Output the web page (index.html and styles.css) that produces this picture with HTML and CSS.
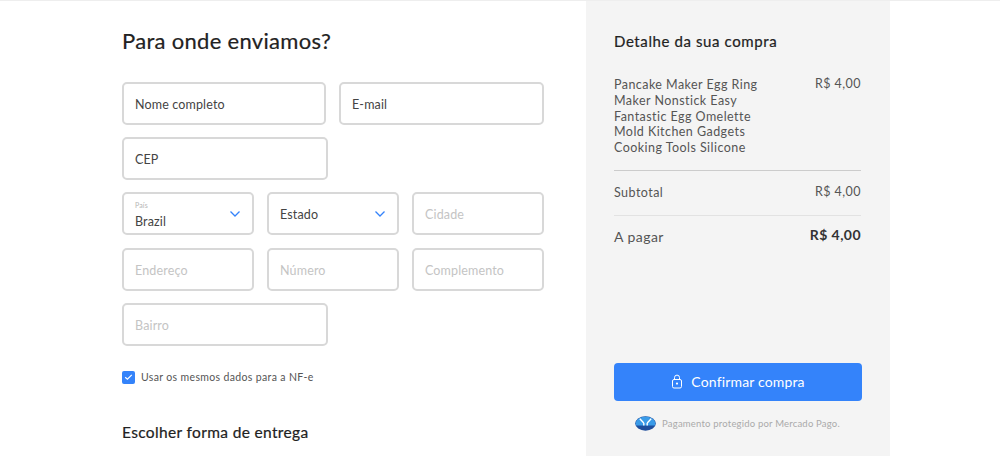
FILE: index.html
```html
<!DOCTYPE html>
<html lang="pt-BR">
<head>
    <meta charset="UTF-8">
    <meta name="viewport" content="width=device-width, initial-scale=1.0">
    <title>Para onde enviamos?</title>
    <link rel="stylesheet" href="styles.css">
</head>
<body>
    <div class="page">
        <main class="shipping">
            <h1>Para onde enviamos?</h1>

            <form class="address-form">
                <div class="form-row">
                    <div class="field name"><span class="value">Nome completo</span></div>
                    <div class="field grow"><span class="value">E-mail</span></div>
                </div>
                <div class="form-row">
                    <div class="field half"><span class="value">CEP</span></div>
                </div>
                <div class="form-row">
                    <div class="field third select">
                        <div class="stacked">
                            <span class="mini-label">País</span>
                            <span class="value">Brazil</span>
                        </div>
                        <svg class="chevron" width="12" height="8" viewBox="0 0 12 8"><path d="M1.5 1.5 6 6l4.500-4.500" fill="none" stroke="#3483fa" stroke-width="1.300"/></svg>
                    </div>
                    <div class="field third select">
                        <span class="value">Estado</span>
                        <svg class="chevron" width="12" height="8" viewBox="0 0 12 8"><path d="M1.5 1.5 6 6l4.500-4.500" fill="none" stroke="#3483fa" stroke-width="1.300"/></svg>
                    </div>
                    <div class="field third"><span class="placeholder">Cidade</span></div>
                </div>
                <div class="form-row">
                    <div class="field third"><span class="placeholder">Endereço</span></div>
                    <div class="field third"><span class="placeholder">Número</span></div>
                    <div class="field third"><span class="placeholder">Complemento</span></div>
                </div>
                <div class="form-row">
                    <div class="field half"><span class="placeholder">Bairro</span></div>
                </div>
            </form>

            <label class="check-row">
                <span class="checkbox">
                    <svg width="9" height="8" viewBox="0 0 9 8"><path d="M1.2 4.200 3.400 6.200 7.800 1.800" fill="none" stroke="#fff" stroke-width="1.200"/></svg>
                </span>
                Usar os mesmos dados para a NF-e
            </label>

            <h2>Escolher forma de entrega</h2>
        </main>

        <aside class="summary">
            <h3>Detalhe da sua compra</h3>

            <div class="line product">
                <span class="product-name">Pancake Maker Egg Ring Maker Nonstick Easy Fantastic Egg Omelette Mold Kitchen Gadgets Cooking Tools Silicone</span>
                <span class="price">R$ 4,00</span>
            </div>
            <div class="line subtotal">
                <span>Subtotal</span>
                <span class="price">R$ 4,00</span>
            </div>
            <div class="line total">
                <span>A pagar</span>
                <span class="price">R$ 4,00</span>
            </div>

            <div class="summary-bottom">
                <button type="button" class="confirm">
                    <svg width="12" height="15" viewBox="0 0 12 15"><rect x="1.500" y="5.500" width="9" height="8.500" rx="1.500" fill="none" stroke="#fff" stroke-width="1"/><path d="M3.500 5.500V3.600a2.500 2.500 0 0 1 5 0v1.900" fill="none" stroke="#fff" stroke-width="1"/><circle cx="6" cy="9.600" r="1.100" fill="#fff"/></svg>
                    Confirmar compra
                </button>
                <div class="protected">
                    <svg width="21" height="15" viewBox="0 0 21 15">
                        <ellipse cx="10.500" cy="7.500" rx="10.300" ry="7.200" fill="#1f4e9c"/>
                        <path d="M.8 6.500C2 2.500 6.500.8 10.500.8s8.500 1.700 9.700 5.700c.2 1.100.1 2-.3 3H1.100c-.4-1-.5-1.900-.3-3z" fill="#3a9be8"/>
                        <path d="M4.800 2.800 8.800 7M16.200 2.800 12.200 7M8.800 7v2.500M12.200 7v2.500" fill="none" stroke="#fff" stroke-width="1.400"/>
                    </svg>
                    <span>Pagamento protegido por Mercado Pago.</span>
                </div>
            </div>
        </aside>
    </div>
</body>
</html>
```

FILE: styles.css
```css
html, body {
    margin: 0;
    padding: 0;
    height: 456px;
    overflow: hidden;
    background-color: #ffffff;
    font-family: Lato, "Open Sans", sans-serif;
    color: #333;
}

.page {
    display: flex;
    height: 456px;
    box-sizing: border-box;
    border-top: 1px solid #eeeeee;
    padding-left: 122px;
}

.shipping {
    width: 422px;
    margin-right: 42px;
}

h1 {
    margin: 26px 0 0;
    font-size: 22px;
    line-height: 28px;
    font-weight: 400;
    letter-spacing: 0.3px;
    color: #222;
    -webkit-text-stroke: 0.2px #222;
}

.address-form {
    display: flex;
    flex-direction: column;
    gap: 12.2px;
    margin-top: 27px;
}

.form-row {
    display: flex;
    gap: 13px;
}

.field {
    display: flex;
    align-items: center;
    justify-content: space-between;
    box-sizing: border-box;
    height: 43px;
    padding: 2px 11.5px 0 11px;
    border: 2px solid #d8d8d8;
    border-radius: 5px;
    background-color: #fff;
    font-size: 12.5px;
    letter-spacing: 0.15px;
}

.name { width: 204px; }
.grow { flex: 1; }
.half { width: 206px; }
.third { width: 132px; }

.value { color: #444; }
.placeholder { color: #c4c4c4; }

.stacked {
    display: flex;
    flex-direction: column;
    margin-top: 1px;
}

.mini-label {
    font-size: 7px;
    line-height: 9px;
    color: #b5b5b5;
}

.stacked .value {
    margin-top: 3px;
    line-height: 17px;
}

.chevron {
    margin-top: -1px;
}

.check-row {
    display: flex;
    align-items: center;
    gap: 6px;
    margin-top: 25px;
    font-size: 10.5px;
    letter-spacing: 0.35px;
    color: #555;
}

.checkbox {
    display: flex;
    align-items: center;
    justify-content: center;
    width: 13px;
    height: 13px;
    border-radius: 2px;
    background-color: #3483fa;
}

h2 {
    margin: 38px 0 0;
    font-size: 15.5px;
    line-height: 20px;
    font-weight: 400;
    letter-spacing: 0.35px;
    color: #222;
    -webkit-text-stroke: 0.2px #222;
}

.summary {
    display: flex;
    flex-direction: column;
    width: 304px;
    box-sizing: border-box;
    padding: 0 29px 0 28px;
    background-color: #f4f4f4;
}

h3 {
    margin: 31px 0 0;
    font-size: 15px;
    line-height: 19px;
    font-weight: 400;
    letter-spacing: 0.6px;
    color: #222;
    -webkit-text-stroke: 0.2px #222;
}

.line {
    display: flex;
    justify-content: space-between;
    font-size: 12.5px;
    letter-spacing: 0.45px;
    color: #555;
}

.line .price {
    margin-top: -1px;
}

.product {
    margin-top: 26px;
    padding-bottom: 14px;
    border-bottom: 1px solid #cccccc;
    line-height: 15.8px;
}

.product-name {
    width: 160px;
}

.subtotal {
    padding: 14px 0 15px;
    border-bottom: 1px solid #e2e2e2;
}

.total {
    padding-top: 12px;
    font-size: 14px;
}

.total .price {
    margin-top: -2px;
    font-weight: 700;
    color: #333;
}

.summary-bottom {
    margin-top: auto;
    padding-bottom: 25px;
}

.confirm {
    display: flex;
    align-items: center;
    justify-content: center;
    gap: 8px;
    width: 248px;
    height: 38px;
    padding: 0 0 2px;
    border: none;
    border-radius: 4px;
    background-color: #3483fa;
    color: #fff;
    font-family: inherit;
    font-size: 14px;
    letter-spacing: 0.15px;
}

.protected {
    display: flex;
    align-items: center;
    justify-content: center;
    gap: 6px;
    margin-top: 15px;
    font-size: 9.5px;
    letter-spacing: 0.2px;
    color: #aaaaaa;
}
```
